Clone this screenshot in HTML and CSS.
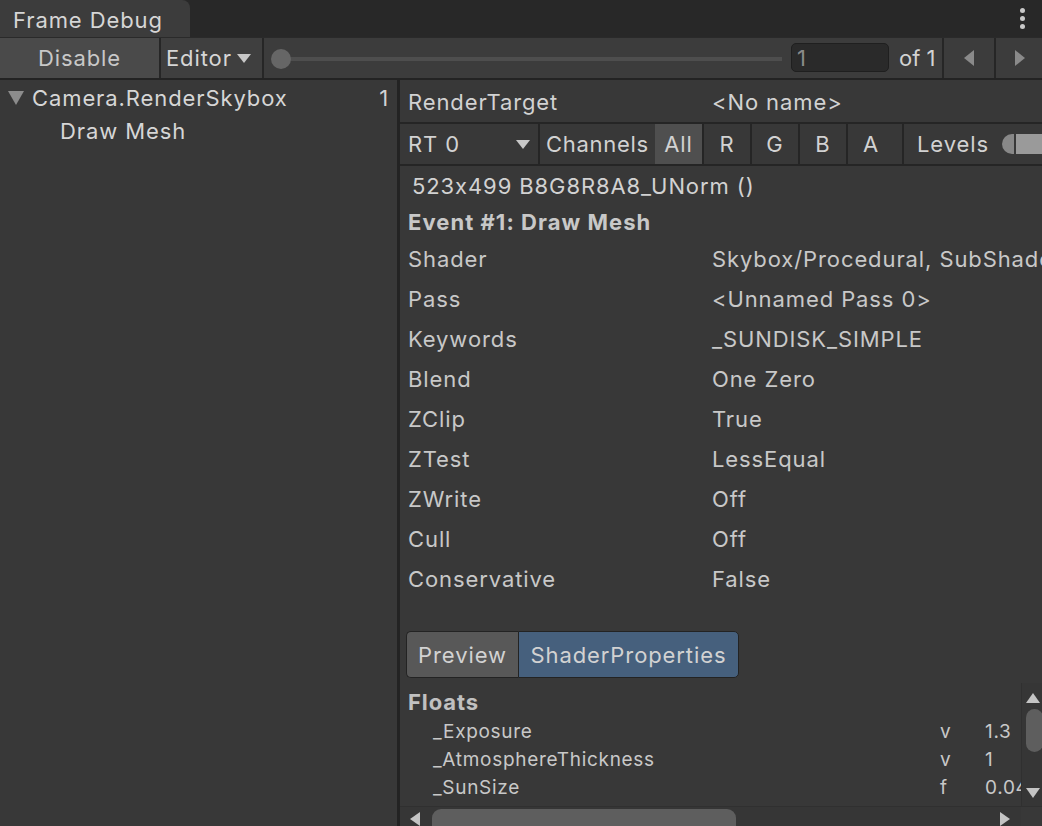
FILE: index.html
```html
<!DOCTYPE html>
<html>
<head>
<meta charset="utf-8">
<link rel="stylesheet" href="styles.css">
</head>
<body>
<div class="win">
  <div class="tabbar">
    <div class="tab">Frame Debug</div>
    <div class="kebab"><span></span><span></span><span></span></div>
  </div>
  <div class="toolbar">
    <div class="btn disable">Disable</div>
    <div class="sep"></div>
    <div class="btn editor">Editor <svg class="caret" width="14" height="9" viewBox="0 0 14 9"><path d="M0 0H14L7 9Z" fill="#c8c8c8"/></svg></div>
    <div class="sep"></div>
    <div class="slider"><div class="track"></div><div class="knob"></div></div>
    <div class="numfield">1</div>
    <div class="of">of 1</div>
    <div class="sep"></div>
    <div class="arrowbtn"><svg width="10" height="16" viewBox="0 0 10 16"><path d="M10 0V16L0 8Z" fill="#8a8a8a"/></svg></div>
    <div class="sep"></div>
    <div class="arrowbtn"><svg width="10" height="16" viewBox="0 0 10 16"><path d="M0 0V16L10 8Z" fill="#8a8a8a"/></svg></div>
  </div>
  <div class="main">
    <div class="left">
      <div class="tree-row">
        <svg class="fold" width="16" height="14" viewBox="0 0 16 14"><path d="M0 0H16L8 14Z" fill="#8c8c8c"/></svg>
        <span class="tname">Camera.RenderSkybox</span>
        <span class="tcount">1</span>
      </div>
      <div class="tree-row child"><span class="tname">Draw Mesh</span></div>
    </div>
    <div class="divider"></div>
    <div class="right">
      <div class="rt-row"><span class="lab">RenderTarget</span><span class="val">&lt;No name&gt;</span></div>
      <div class="chanbar">
        <div class="rtdrop">RT 0 <svg class="caret" width="14" height="9" viewBox="0 0 14 9"><path d="M0 0H14L7 9Z" fill="#c8c8c8"/></svg></div>
        <div class="csep"></div>
        <div class="chlabel">Channels</div>
        <div class="ch active">All</div>
        <div class="csep"></div>
        <div class="ch">R</div>
        <div class="csep"></div>
        <div class="ch">G</div>
        <div class="csep"></div>
        <div class="ch">B</div>
        <div class="csep"></div>
        <div class="ch wide">A</div>
        <div class="csep"></div>
        <div class="levels">Levels</div>
        <div class="lvslider"><div class="lvcap"></div><div class="lvbar"></div></div>
      </div>
      <div class="fmt">523x499 B8G8R8A8_UNorm ()</div>
      <div class="event">Event #1: Draw Mesh</div>
      <div class="props">
        <div class="prow"><span class="lab">Shader</span><span class="val">Skybox/Procedural, SubShader #0</span></div>
        <div class="prow"><span class="lab">Pass</span><span class="val">&lt;Unnamed Pass 0&gt;</span></div>
        <div class="prow"><span class="lab">Keywords</span><span class="val">_SUNDISK_SIMPLE</span></div>
        <div class="prow"><span class="lab">Blend</span><span class="val">One Zero</span></div>
        <div class="prow"><span class="lab">ZClip</span><span class="val">True</span></div>
        <div class="prow"><span class="lab">ZTest</span><span class="val">LessEqual</span></div>
        <div class="prow"><span class="lab">ZWrite</span><span class="val">Off</span></div>
        <div class="prow"><span class="lab">Cull</span><span class="val">Off</span></div>
        <div class="prow"><span class="lab">Conservative</span><span class="val">False</span></div>
      </div>
      <div class="tabs">
        <div class="ptab">Preview</div>
        <div class="ptab sel">ShaderProperties</div>
      </div>
      <div class="scrollarea">
        <div class="content">
          <div class="floats">Floats</div>
          <div class="frow"><span class="fname">_Exposure</span><span class="ftype">v</span><span class="fval">1.3</span></div>
          <div class="frow"><span class="fname">_AtmosphereThickness</span><span class="ftype">v</span><span class="fval">1</span></div>
          <div class="frow"><span class="fname">_SunSize</span><span class="ftype">f</span><span class="fval">0.04</span></div>
        </div>
        <div class="vscroll">
          <svg width="14" height="10" viewBox="0 0 14 10"><path d="M0 10H14L7 0Z" fill="#c4c4c4"/></svg>
          <div class="vthumb"></div>
          <div class="vfill"></div>
          <svg width="14" height="10" viewBox="0 0 14 10"><path d="M0 0H14L7 10Z" fill="#c4c4c4"/></svg>
        </div>
      </div>
      <div class="hscroll">
        <svg class="harrow" width="10" height="14" viewBox="0 0 10 14"><path d="M10 0V14L0 7Z" fill="#c4c4c4"/></svg>
        <div class="hthumb"></div>
        <div class="hfill"></div>
        <svg class="harrow" width="10" height="14" viewBox="0 0 10 14"><path d="M0 0V14L10 7Z" fill="#c4c4c4"/></svg>
        <div class="corner"></div>
      </div>
    </div>
  </div>
</div>
</body>
</html>
```

FILE: styles.css
```css
* { box-sizing: border-box; }
html, body { margin: 0; padding: 0; background: #282828; }
body {
  font-family: Inter, "Noto Sans", sans-serif;
  font-size: 22px;
  letter-spacing: 0.9px;
  font-feature-settings: "calt" 0;
  color: #d2d2d2;
  width: 1042px;
  height: 826px;
  overflow: hidden;
}
.win { width: 1042px; height: 826px; display: flex; flex-direction: column; }

.tabbar { height: 37px; display: flex; align-items: flex-end; justify-content: space-between; background: #282828; flex: none; }
.tab {
  width: 190px; height: 37px; background: #3c3c3c;
  border-top-right-radius: 8px;
  padding-left: 13px; padding-top: 3px; display: flex; align-items: center;
  color: #d6d6d6;
}
.kebab { width: 44px; height: 37px; display: flex; flex-direction: column; align-items: center; justify-content: center; gap: 3px; padding-left: 4px; }
.kebab span { width: 5px; height: 5px; border-radius: 50%; background: #c8c8c8; display: block; }

.toolbar {
  height: 43px; flex: none; background: #3c3c3c;
  border-top: 1px solid #2a2a2a; border-bottom: 2px solid #232323;
  display: flex; align-items: stretch;
}
.sep { width: 2px; background: #262626; flex: none; }
.btn { display: flex; align-items: center; justify-content: center; flex: none; }
.disable { width: 159px; background: #4a4a4a; color: #c8c8c8; }
.editor { width: 101px; background: #3f3f3f; padding-left: 5px; gap: 5px; justify-content: flex-start; color: #d6d6d6; }
.caret { display: block; }
.slider { position: relative; width: 518px; flex: none; }
.track { position: absolute; left: 16px; right: 0; top: 19px; height: 4px; background: #4e4e4e; }
.knob { position: absolute; left: 7px; top: 11px; width: 20px; height: 20px; border-radius: 50%; background: #666; }
.numfield {
  margin: 5px 0 6px 9px; width: 98px; flex: none;
  background: #2a2a2a; border: 1px solid #1f1f1f; border-radius: 5px;
  color: #8a8a8a; padding-left: 5px; display: flex; align-items: center;
}
.of { width: 53px; flex: none; display: flex; align-items: center; padding-left: 10px; color: #d2d2d2; letter-spacing: 0; }
.arrowbtn { width: 50px; flex: none; display: flex; align-items: center; justify-content: center; }
.arrowbtn:last-child { width: 47px; }

.main { flex: 1; display: flex; min-height: 0; }
.left { width: 397px; flex: none; background: #383838; padding-top: 1px; }
.tree-row { height: 33px; display: flex; align-items: center; position: relative; }
.fold { margin-left: 8px; margin-right: 8px; margin-top: 1px; }
.tname { color: #d6d6d6; }
.tcount { position: absolute; right: 8px; }
.child { padding-left: 60px; }
.divider { width: 3px; background: #232323; flex: none; }
.right { flex: 1; background: #383838; display: flex; flex-direction: column; min-width: 0; overflow: hidden; }

.lab { width: 304px; flex: none; display: inline-block; }
.val { white-space: nowrap; }
.rt-row { height: 42px; display: flex; align-items: center; padding-left: 8px; padding-top: 2px; white-space: nowrap; flex: none; }

.chanbar {
  height: 44px; flex: none; display: flex; align-items: stretch;
  border-top: 2px solid #252525; border-bottom: 2px solid #252525;
  white-space: nowrap; background: #383838;
}
.csep { width: 2px; background: #252525; flex: none; }
.rtdrop { width: 138px; flex: none; display: flex; align-items: center; justify-content: space-between; padding: 0 8px 0 8px; }
.chlabel { width: 115px; flex: none; display: flex; align-items: center; padding-left: 6px; letter-spacing: 0.7px; }
.ch { width: 46px; flex: none; display: flex; align-items: center; justify-content: center; }
.ch.active { background: #4f4f4f; width: 47px; }
.ch.wide { width: 54px; padding-right: 8px; }
.levels { width: 98px; flex: none; display: flex; align-items: center; padding-left: 13px; }
.lvslider { flex: 1; display: flex; align-items: center; }
.lvcap { width: 12px; height: 20px; background: #888; border-radius: 10px 0 0 10px; margin-right: 2px; }
.lvbar { flex: 1; height: 20px; background: #9a9a9a; }

.fmt { height: 40px; flex: none; display: flex; align-items: center; padding-left: 12px; white-space: nowrap; }
.event { height: 32px; flex: none; display: flex; align-items: center; padding-left: 8px; font-weight: 700; color: #c8c8c8; white-space: nowrap; letter-spacing: 1.05px; }
.props { flex: none; padding-top: 1px; }
.prow { height: 40px; display: flex; align-items: center; padding-left: 8px; white-space: nowrap; color: #c8c8c8; }

.tabs { flex: none; display: flex; margin-top: 32px; margin-left: 6px; height: 47px; }
.ptab { display: flex; align-items: center; justify-content: center; border: 1px solid #232323; }
.ptab:first-child { width: 112px; background: #585858; border-radius: 5px 0 0 5px; border-right: none; }
.ptab.sel { width: 221px; background: #46607d; border-radius: 0 5px 5px 0; }

.scrollarea { height: 123px; flex: none; display: flex; margin-top: 5px; }
.content { flex: 1; min-width: 0; overflow: hidden; }
.floats { height: 31px; display: flex; align-items: center; padding-left: 8px; font-weight: 700; color: #c0c0c0; margin-top: 3px; }
.frow { height: 28px; display: flex; align-items: center; font-size: 19px; letter-spacing: 0.7px; white-space: nowrap; color: #c8c8c8; }
.frow:first-of-type { margin-top: 1px; }
.fname { width: 540px; padding-left: 33px; flex: none; }
.ftype { width: 45px; flex: none; }
.fval { flex: none; }
.vscroll { width: 21px; flex: none; background: #363636; border-left: 1px solid #303030; display: flex; flex-direction: column; align-items: center; padding-top: 10px; }
.vscroll svg { flex: none; margin-left: 2px; }
.vthumb { width: 17px; height: 43px; border-radius: 9px; background: #5e5e5e; margin-top: 6px; margin-left: 4px; flex: none; }
.vfill { flex: 1; }
.vscroll svg:last-child { margin-bottom: 8px; }

.hscroll { height: 20px; flex: none; display: flex; align-items: center; border-top: 1px solid #303030; background: #363636; }
.harrow { flex: none; margin-left: 10px; margin-top: 5px; }
.hthumb { width: 304px; height: 17px; border-radius: 9px 9px 0 0; background: #5e5e5e; margin-left: 12px; align-self: flex-end; }
.hfill { flex: 1; }
.hscroll .harrow:nth-of-type(2) { margin-right: 11px; margin-left: 0; }
.corner { width: 21px; height: 20px; background: #383838; flex: none; }
```
